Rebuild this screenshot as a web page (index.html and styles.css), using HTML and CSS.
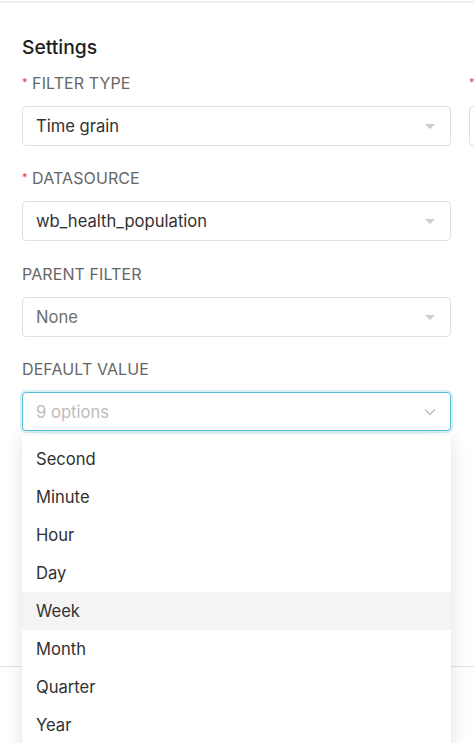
FILE: index.html
```html
<!DOCTYPE html>
<html lang="en">
<head>
<meta charset="utf-8">
<title>Settings</title>
<link rel="stylesheet" href="styles.css">
</head>
<body>
<div class="topbar"></div>
<div class="panel">
  <h2 class="title">Settings</h2>
  <div class="columns">
    <div class="col">
      <div class="item">
        <div class="label"><span class="req">*</span> FILTER TYPE</div>
        <div class="select"><span class="value">Time grain</span><span class="caret"></span></div>
      </div>
      <div class="item wide">
        <div class="label"><span class="req">*</span> DATASOURCE</div>
        <div class="select"><span class="value">wb_health_population</span><span class="caret"></span></div>
      </div>
      <div class="item">
        <div class="label">PARENT FILTER</div>
        <div class="select"><span class="value muted">None</span><span class="caret"></span></div>
      </div>
      <div class="item last">
        <div class="label">DEFAULT VALUE</div>
        <div class="select focused">
          <span class="value placeholder">9 options</span>
          <svg class="chevron" width="12" height="8" viewBox="0 0 12 8"><path d="M1 1.5 L6 6.5 L11 1.5" fill="none" stroke="#b8b8b8" stroke-width="1.2"/></svg>
        </div>
        <ul class="dropdown">
          <li>Second</li>
          <li>Minute</li>
          <li>Hour</li>
          <li>Day</li>
          <li class="active">Week</li>
          <li>Month</li>
          <li>Quarter</li>
          <li>Year</li>
        </ul>
      </div>
    </div>
    <div class="col">
      <div class="item">
        <div class="label"><span class="req">*</span></div>
        <div class="select"></div>
      </div>
    </div>
  </div>
  <div class="footer"></div>
</div>
</body>
</html>
```
FILE: styles.css
```css
html, body {
  margin: 0;
  padding: 0;
  background: #ffffff;
  overflow: hidden;
  width: 474px;
  height: 743px;
  font-family: Inter, "Noto Sans", "Liberation Sans", sans-serif;
}

.topbar {
  height: 1px;
  border-bottom: 2px solid #efefef;
}

.panel {
  padding: 32px 0 0 22px;
}

.title {
  margin: 0 0 13px 0;
  font-size: 19.3px;
  line-height: 24px;
  font-weight: 500;
  color: #1d1d1d;
}

.columns {
  display: grid;
  grid-template-columns: 429px 429px;
  column-gap: 18px;
}

.item {
  position: relative;
  margin-bottom: 21px;
}

.item.wide {
  margin-bottom: 22px;
}

.item.last {
  margin-bottom: 0;
}

.label {
  height: 22px;
  font-size: 16px;
  line-height: 23px;
  color: #666666;
  letter-spacing: 0.1px;
  margin-bottom: 12px;
  white-space: nowrap;
}

.req {
  color: #e04355;
  font-size: 11px;
  line-height: 0;
  vertical-align: 3px;
  letter-spacing: 0;
}

.select {
  box-sizing: border-box;
  height: 40px;
  border: 1px solid #e0e0e0;
  border-radius: 4px;
  display: flex;
  align-items: center;
  justify-content: space-between;
  padding: 0 14px 0 13px;
  background: #fff;
}

.value {
  font-size: 16.6px;
  color: #323232;
}

.value.muted {
  color: #6f6f6f;
}

.value.placeholder {
  color: #bdbdbd;
}

.caret {
  width: 0;
  height: 0;
  border-left: 5px solid transparent;
  border-right: 5px solid transparent;
  border-top: 5px solid #cccccc;
  margin-right: 1px;
}

.select.focused {
  height: 39px;
  border: 1px solid #5ac1d9;
  box-shadow: 0 0 0 2px rgba(32, 167, 201, 0.18);
}

.chevron {
  display: block;
}

.dropdown {
  position: absolute;
  left: 0;
  top: 77px;
  width: 429px;
  margin: 0;
  padding: 5px 0 0 0;
  list-style: none;
  background: #fff;
  box-shadow: 0 3px 18px rgba(0, 0, 0, 0.12);
  z-index: 10;
  height: 400px;
}

.dropdown li {
  height: 38px;
  line-height: 38px;
  padding-left: 14px;
  font-size: 16.6px;
  color: #323232;
}

.dropdown li.active {
  background: #f4f4f4;
}

.footer {
  margin: 235px 0 0 -22px;
  border-top: 1px solid #e3e3e3;
  height: 80px;
}
```
